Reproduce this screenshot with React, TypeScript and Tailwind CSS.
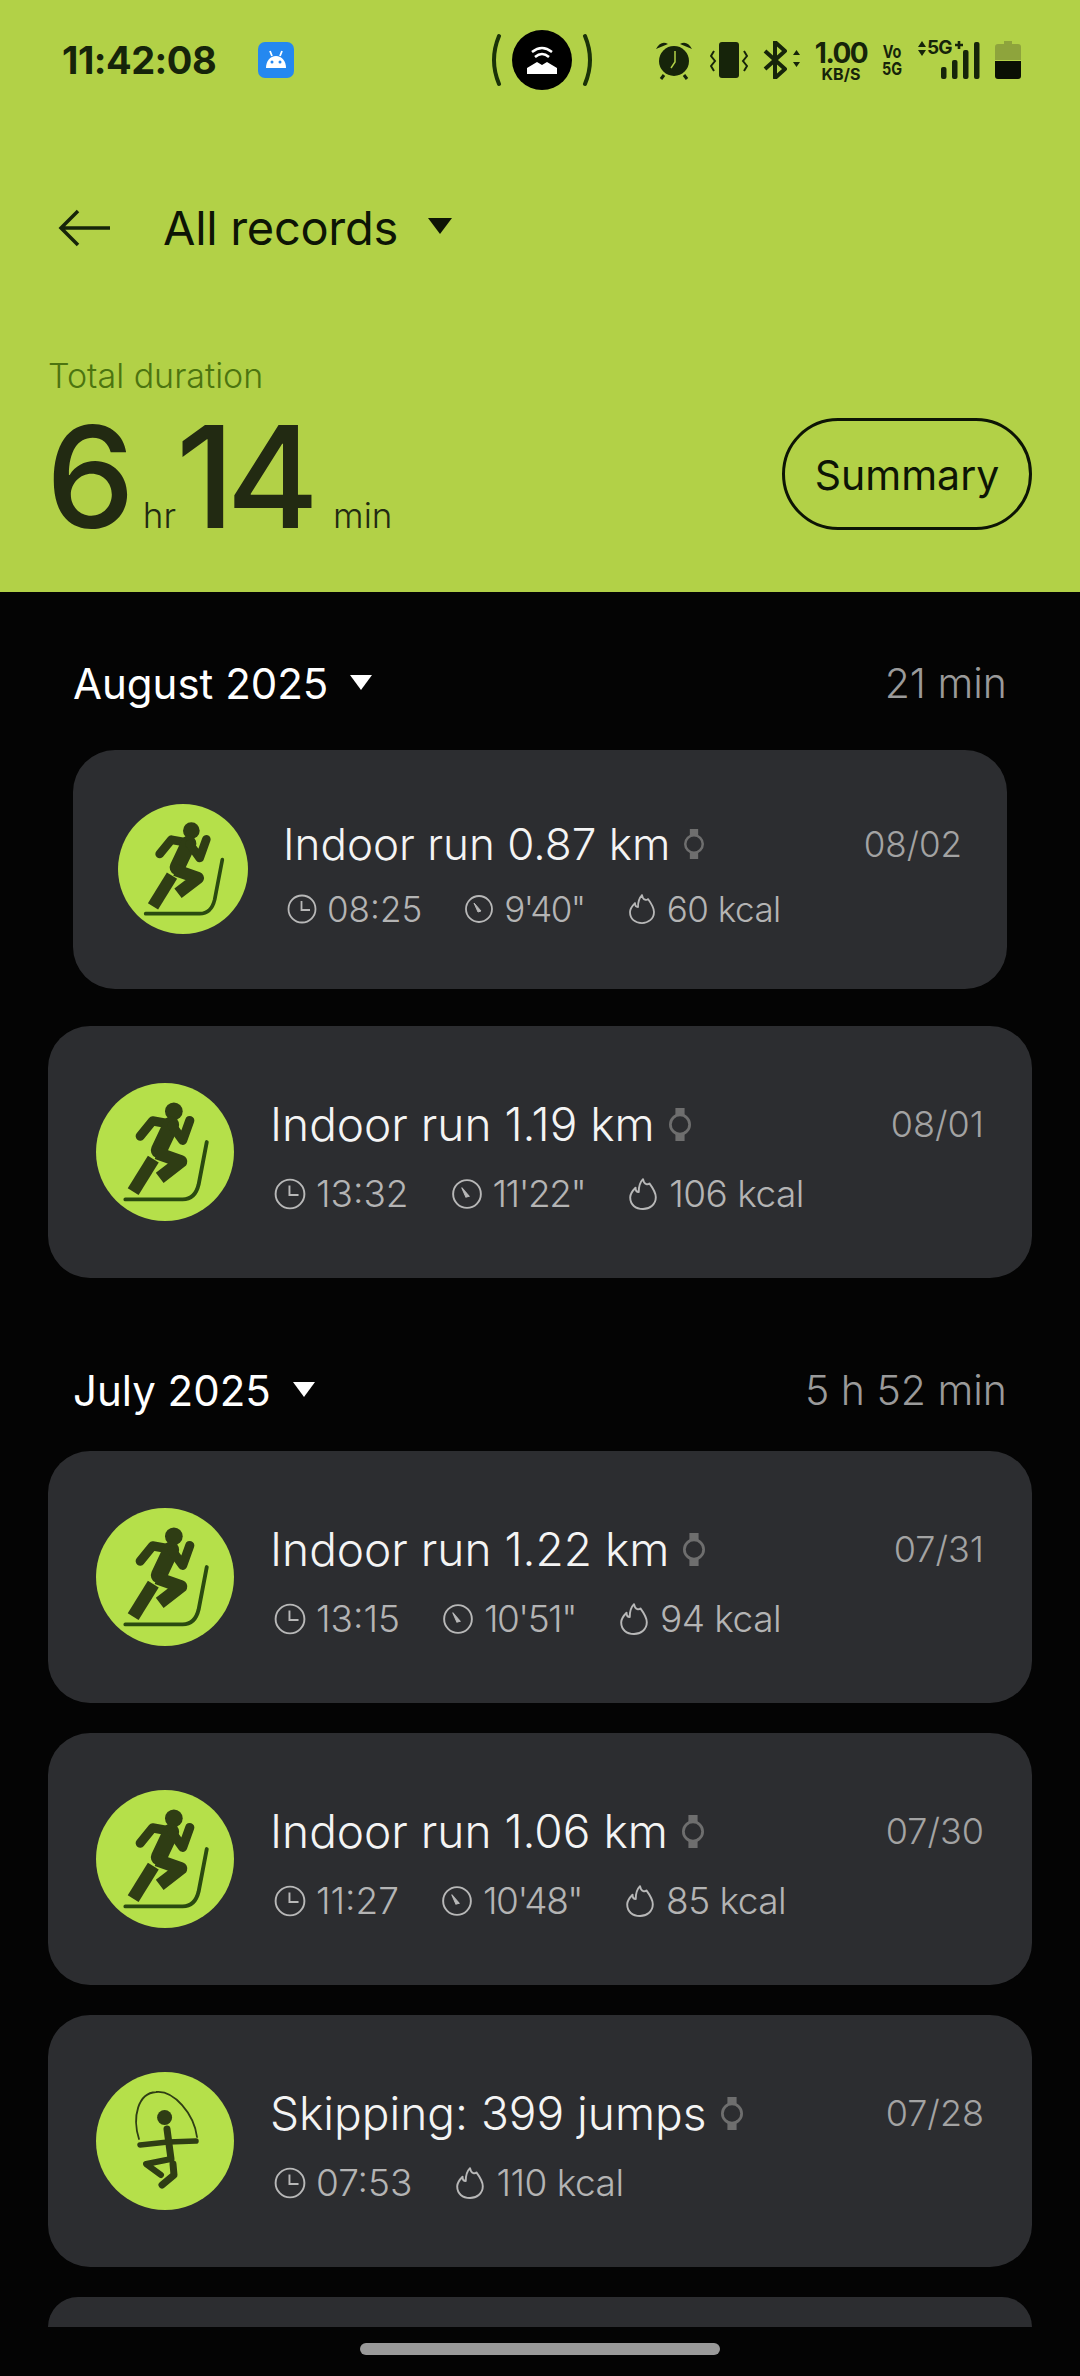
import React from "react";

const F = "font-['Inter','Noto_Sans',sans-serif]";

function Runner() {
  return (
    <svg viewBox="0 0 390 390" className="w-full h-full">
      <circle cx="195" cy="195" r="195" fill="#b5e04a" />
      <g fill="none" stroke="#2f3d14" strokeLinecap="round" strokeLinejoin="round">
        <circle cx="220" cy="80" r="25" fill="#2f3d14" stroke="none" />
        <path d="M125 150 L160 107 L215 117" strokeWidth="26" />
        <path d="M212 118 L178 190" strokeWidth="46" />
        <path d="M215 120 L245 162 L265 106" strokeWidth="26" />
        <path d="M172 198 L240 222 L180 268" strokeWidth="36" strokeLinecap="butt" />
        <path d="M162 215 L105 307" strokeWidth="36" strokeLinecap="butt" />
        <path d="M83 329 L245 329 Q280 329 290 287 L313 167" strokeWidth="11" stroke="#2a4a10" />
      </g>
    </svg>
  );
}

function Skipper() {
  return (
    <svg viewBox="0 0 138 138" className="w-full h-full">
      <circle cx="69" cy="69" r="69" fill="#b5e04a" />
      <g fill="none" stroke="#2f3d14" strokeLinecap="round" strokeLinejoin="round">
        <circle cx="68.6" cy="45.5" r="7.5" fill="#2f3d14" stroke="none" />
        <path d="M43 67 C36 45 42 21 60 20 C78 18 98 42 101 65" strokeWidth="1.8" />
        <path d="M44 73 L72 70 L100 69" strokeWidth="5.5" />
        <path d="M71 57 L75 87" strokeWidth="7" />
        <path d="M75 87 L50 92 L65 103" strokeWidth="6" />
        <path d="M77 92 L78 103 L66 113" strokeWidth="7" />
      </g>
    </svg>
  );
}

function Clock({ s }: { s: number }) {
  return (
    <svg viewBox="0 0 30 30" style={{ width: s, height: s }} className="shrink-0">
      <circle cx="15" cy="15" r="13.5" fill="none" stroke="#b8b8b8" strokeWidth="1.8" />
      <path d="M14.5 7 V16 H23" fill="none" stroke="#b8b8b8" strokeWidth="1.8" />
    </svg>
  );
}
function Pace({ s }: { s: number }) {
  return (
    <svg viewBox="0 0 30 30" style={{ width: s, height: s }} className="shrink-0">
      <circle cx="15" cy="15" r="13" fill="none" stroke="#b8b8b8" strokeWidth="1.8" />
      <path d="M10 9 L17 17 L14 18 Z" fill="#b8b8b8" stroke="#b8b8b8" strokeWidth="1" />
    </svg>
  );
}
function Fire({ s }: { s: number }) {
  return (
    <svg viewBox="0 0 30 32" style={{ width: s, height: s * 1.07 }} className="shrink-0">
      <path d="M15 2 C16 8 20 7 21 6 C24 10 27 14 27 19 C27 26 21 30 15 30 C8 30 3 26 3 19 C3 15 6 12 8 10 C8 12 9 14 11 14 C11 9 12 5 15 2 Z" fill="none" stroke="#b8b8b8" strokeWidth="1.8" strokeLinejoin="round" />
    </svg>
  );
}
function Watch({ s }: { s: number }) {
  return (
    <svg viewBox="0 0 24 36" style={{ width: s, height: s * 1.5 }} className="shrink-0">
      <rect x="7" y="0" width="10" height="8" fill="#6e6e6e" />
      <rect x="7" y="28" width="10" height="8" fill="#6e6e6e" />
      <circle cx="12" cy="18" r="10.5" fill="#2c2d30" stroke="#6e6e6e" strokeWidth="3" />
    </svg>
  );
}

type Rec = { title: string; date: string; time: string; pace?: string; kcal: string; skip?: boolean };

function Card({ r, small, mt }: { r: Rec; small?: boolean; mt: string }) {
  const iconS = small ? 30 : 32;
  const meta = small ? "text-[35px]" : "text-[37px]";
  return (
    <div
      className={`${mt} ${small ? "mx-[73px] h-[239px] pl-[45px] pr-[45px]" : "mx-[48px] h-[252px] pl-[48px] pr-[48px]"} shrink-0 rounded-[42px] bg-[#2c2d30] flex items-start`}
    >
      <div className={`shrink-0 ${small ? "w-[130px] h-[130px] mt-[54px]" : "w-[138px] h-[138px] mt-[57px]"}`}>
        {r.skip ? <Skipper /> : <Runner />}
      </div>
      <div className={`flex-1 min-w-0 ${small ? "ml-[35px] pt-[67px]" : "ml-[36px] pt-[70px]"}`}>
        <div className="flex items-center justify-between">
          <div className="flex items-center">
            <span className={`${small ? "text-[44px] leading-[54px]" : "text-[46px] leading-[56px]"} font-light text-[#f4f4f4]`}>{r.title}</span>
            <span className="ml-[14px]">
              <Watch s={small ? 20 : 22} />
            </span>
          </div>
          <span className={`${small ? "text-[35px]" : "text-[36px]"} font-light text-[#a3a3a3]`}>{r.date}</span>
        </div>
        <div className={`flex items-center ${small ? "mt-[15px] ml-[4px]" : "mt-[19px] ml-[4px]"} ${meta} leading-[46px] font-light text-[#b4b4b4]`}>
          <Clock s={iconS} />
          <span className="ml-[10px]">{r.time}</span>
          {r.pace && (
            <>
              <span className="ml-[42px]"><Pace s={iconS} /></span>
              <span className="ml-[10px] tracking-[-1.5px]">{r.pace}</span>
            </>
          )}
          <span className="ml-[42px]"><Fire s={iconS} /></span>
          <span className="ml-[10px] tracking-[-0.5px]">{r.kcal}</span>
        </div>
      </div>
    </div>
  );
}

function Month({ label, total, mt }: { label: string; total: string; mt: string }) {
  return (
    <div className={`${mt} mx-[73px] flex items-center justify-between h-[50px] shrink-0`}>
      <div className="flex items-center">
        <span className="text-[42px] leading-[50px] text-white">{label}</span>
        <svg viewBox="0 0 22 15" className="ml-[22px] w-[22px] h-[15px] -mt-[4px]">
          <path d="M0 0 H22 L11 15 Z" fill="#fff" />
        </svg>
      </div>
      <span className="text-[41px] font-light text-[#9a9a9a]">{total}</span>
    </div>
  );
}

function StatusBar() {
  return (
    <div className="h-[120px] shrink-0 flex items-center pl-[62px] text-[#16240a]">
      <span className="text-[38px] font-bold w-[196px] tracking-[-0.5px]">11:42:08</span>
      <svg viewBox="0 0 36 36" className="w-[36px] h-[36px]">
        <rect width="36" height="36" rx="7" fill="#2488f0" />
        <path d="M8 26 C8 19 12 14 18 14 C24 14 28 19 28 26 Z" fill="#fff" />
        <path d="M12 9 L14 14 M24 9 L22 14" stroke="#fff" strokeWidth="1.8" />
        <circle cx="14" cy="20" r="1.5" fill="#2488f0" />
        <circle cx="22" cy="20" r="1.5" fill="#2488f0" />
      </svg>
      <svg viewBox="0 0 110 60" className="ml-[193px] w-[110px] h-[60px]">
        <path d="M12 6 Q2 30 12 54" fill="none" stroke="#1a3208" strokeWidth="4" strokeLinecap="round" />
        <path d="M98 6 Q108 30 98 54" fill="none" stroke="#1a3208" strokeWidth="4" strokeLinecap="round" />
        <circle cx="55" cy="30" r="30" fill="#000" />
        <path d="M45 22 Q55 14 65 22" fill="none" stroke="#fff" strokeWidth="2.5" />
        <path d="M48 27 Q55 21 62 27" fill="none" stroke="#fff" strokeWidth="2.5" />
        <path d="M40 44 L40 38 L50 32 L55 35 L60 32 L70 38 L70 44 Z" fill="#fff" />
      </svg>
      <svg viewBox="0 0 38 40" className="ml-[58px] w-[38px] h-[40px]">
        <circle cx="19" cy="21" r="15" fill="#16240a" />
        <path d="M1 9 Q6 0 13 4 Z M37 9 Q32 0 25 4 Z" fill="#16240a" />
        <path d="M9 35 L6 39 M29 35 L32 39" stroke="#16240a" strokeWidth="3" />
        <path d="M20 11 V22 L16 28" stroke="#b2d147" strokeWidth="1.5" fill="none" />
      </svg>
      <svg viewBox="0 0 38 38" className="ml-[17px] w-[38px] h-[38px]">
        <rect x="9" y="1" width="20" height="36" rx="3" fill="#16240a" />
        <path d="M4 10 L1 15 L5 20 L1 25 L4 30 M34 10 L37 15 L33 20 L37 25 L34 30" fill="none" stroke="#16240a" strokeWidth="2" />
      </svg>
      <svg viewBox="0 0 38 38" className="ml-[15px] w-[38px] h-[38px]">
        <path d="M2 10 L22 28 L12 37 V1 L22 10 L2 28" fill="none" stroke="#16240a" strokeWidth="4" strokeLinejoin="round" />
        <path d="M30 14 L37 14 L33.5 9 Z M30 21 L37 21 L33.5 26 Z" fill="#16240a" />
      </svg>
      <div className="ml-[12px] w-[56px] flex flex-col items-center font-bold">
        <span className="text-[28px] leading-[28px] tracking-[-1.5px]">1.00</span>
        <span className="text-[16px] leading-[14px]">KB/S</span>
      </div>
      <div className="ml-[12px] w-[22px] flex flex-col items-center font-bold text-[18px] leading-[17px] scale-x-[0.8]">
        <span>Vo</span>
        <span>5G</span>
      </div>
      <div className="ml-[14px] w-[63px] h-[40px] relative">
        <span className="absolute left-[10px] top-[-2px] text-[19px] font-bold leading-[20px] tracking-[-1px]">5G</span>
        <svg viewBox="0 0 63 40" className="w-full h-full">
          <path d="M1 7 L9 7 L5 1 Z M1 10 L9 10 L5 16 Z" fill="#16240a" />
          <path d="M38 5 H46 M42 1 V9" stroke="#16240a" strokeWidth="2.6" />
          <rect x="24" y="27" width="5.5" height="12" rx="2" fill="#16240a" />
          <rect x="35" y="20" width="5.5" height="19" rx="2" fill="#16240a" />
          <rect x="46" y="10" width="5.5" height="29" rx="2" fill="#16240a" />
          <rect x="57" y="2" width="5.5" height="37" rx="2" fill="#16240a" />
        </svg>
      </div>
      <svg viewBox="0 0 26 38" className="ml-[15px] w-[26px] h-[38px]">
        <path d="M9 0 H17 V3 H23 Q26 3 26 6 V19 H0 V6 Q0 3 3 3 H9 Z" fill="#8ea43c" />
        <path d="M0 20 H26 V35 Q26 38 23 38 H3 Q0 38 0 35 Z" fill="#0a0f04" />
      </svg>
    </div>
  );
}

export default function App() {
  return (
    <div className={`${F} w-[1080px] h-[2376px] bg-[#040404] overflow-hidden flex flex-col`}>
      <div className="h-[592px] shrink-0 bg-[#b2d147] flex flex-col">
        <StatusBar />
        <div className="flex items-center h-[60px] mt-[78px] pl-[58px]">
          <svg viewBox="0 0 54 38" className="w-[54px] h-[38px]">
            <path d="M20 2 L3 19 L20 36 M3 19 H52" fill="none" stroke="#16240a" strokeWidth="3.5" />
          </svg>
          <span className="ml-[51px] text-[47px] text-[#0d1505] leading-[60px] tracking-[-0.3px]">All records</span>
          <svg viewBox="0 0 24 16" className="ml-[30px] w-[24px] h-[16px] -mt-[4px]">
            <path d="M0 0 H24 L12 16 Z" fill="#0d1505" />
          </svg>
        </div>
        <div className="mt-[98px] pl-[48px] text-[34px] font-light leading-[40px] text-[#4c7410]">Total duration</div>
        <div className="flex items-end justify-between pl-[46px] pr-[48px] mt-[16px]">
          <div className="flex items-baseline text-[#222a12] h-[130px]">
            <span className="text-[141px] leading-[130px] font-medium tracking-[-5px]">6</span>
            <span className="ml-[13px] text-[35px] font-light">hr</span>
            <span className="text-[141px] leading-[130px] font-medium tracking-[-8px]">14</span>
            <span className="ml-[22px] text-[35px] font-light">min</span>
          </div>
          <div className="w-[250px] h-[112px] pt-[4px] rounded-full border-[3px] border-[#0d1505] flex items-center justify-center text-[41px] text-[#0d1505] mb-[12px]">
            Summary
          </div>
        </div>
      </div>
      <Month label="August 2025" total="21 min" mt="mt-[67px]" />
      <Card small mt="mt-[41px]" r={{ title: "Indoor run 0.87 km", date: "08/02", time: "08:25", pace: "9'40\"", kcal: "60 kcal" }} />
      <Card mt="mt-[37px]" r={{ title: "Indoor run 1.19 km", date: "08/01", time: "13:32", pace: "11'22\"", kcal: "106 kcal" }} />
      <Month label="July 2025" total="5 h 52 min" mt="mt-[88px]" />
      <Card mt="mt-[35px]" r={{ title: "Indoor run 1.22 km", date: "07/31", time: "13:15", pace: "10'51\"", kcal: "94 kcal" }} />
      <Card mt="mt-[30px]" r={{ title: "Indoor run 1.06 km", date: "07/30", time: "11:27", pace: "10'48\"", kcal: "85 kcal" }} />
      <Card mt="mt-[30px]" r={{ title: "Skipping: 399 jumps", date: "07/28", time: "07:53", kcal: "110 kcal", skip: true }} />
      <div className="mt-[30px] mx-[48px] h-[30px] shrink-0 rounded-t-[42px] bg-[#2c2d30]" />
      <div className="mt-[16px] mx-auto w-[360px] h-[12px] shrink-0 rounded-full bg-[#9a9a9a]" />
    </div>
  );
}
